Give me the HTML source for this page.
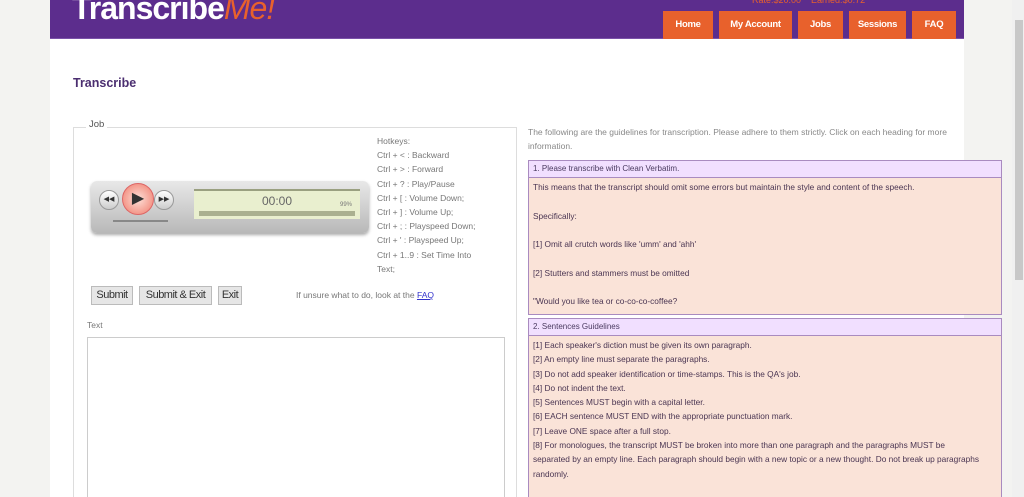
<!DOCTYPE html>
<html style="width:1024px;height:497px;overflow:hidden"><head><style>
*{margin:0;padding:0;box-sizing:border-box}
body{width:1024px;height:497px;overflow:hidden;background:#f3f3f1;font-family:"Liberation Sans",sans-serif;position:relative}
.abs{position:absolute}
#wrap{left:50px;top:0;width:914px;height:497px;background:#fff}
#hdr{left:50px;top:0;width:914px;height:39px;background:#5c2d8d;border-bottom:1px solid #7a52a8}
.nav{top:11px;height:28px;background:#e8612c;color:#fff;font-size:9.5px;font-weight:bold;text-align:center;line-height:28px;letter-spacing:-0.3px}
.hk{left:377px;font-size:8.5px;color:#777;line-height:14.2px;top:134px}
.btn{top:286px;height:19px;border:1px solid #bbb;background:#e6e6e6;font-size:11px;color:#333;text-align:center;line-height:17px;letter-spacing:-0.5px}
.box{left:528px;width:474px;border:1px solid #a98bc0;overflow:hidden}
.bh{background:#f1dfff;font-size:8px;color:#4a3a60;padding-left:4px;line-height:16px;border-bottom:1px solid #a98bc0}
.bb{background:#fae3d8;font-size:8.3px;color:#4a3552;padding:2px 4px}
</style></head><body>
<div class="abs" id="wrap"></div>
<div class="abs" style="left:1012px;top:0;width:12px;height:497px;background:#f0f0f0"></div>
<div class="abs" style="left:1015px;top:20px;width:8px;height:260px;background:#c8c8c8"></div>
<div class="abs" id="hdr"></div>
<div class="abs" style="left:72px;top:-10px;font-size:32px;font-weight:bold;color:#fff;letter-spacing:-1px">Transcribe<span style="color:#e8612c;font-style:italic;font-weight:normal">Me!</span></div>
<div class="abs" style="left:752px;top:-5px;font-size:9px;color:#e8612c">Rate:$20.00 &nbsp;&nbsp; Earned:$0.72</div>
<div class="abs nav" style="left:663px;width:50px">Home</div>
<div class="abs nav" style="left:719px;width:73px">My Account</div>
<div class="abs nav" style="left:798px;width:45px">Jobs</div>
<div class="abs nav" style="left:849px;width:57px">Sessions</div>
<div class="abs nav" style="left:912px;width:44px">FAQ</div>
<div class="abs" style="left:73px;top:76px;font-size:12.5px;font-weight:bold;color:#4b2e70">Transcribe</div>
<div class="abs" style="left:73px;top:127px;width:444px;height:370px;border:1px solid #ddd;border-bottom:none"></div>
<div class="abs" style="left:86px;top:119px;background:#fff;padding:0 3px;font-size:9.5px;color:#555">Job</div>
<div class="abs hk">Hotkeys:<br>Ctrl + &lt; : Backward<br>Ctrl + &gt; : Forward<br>Ctrl + ? : Play/Pause<br>Ctrl + [ : Volume Down;<br>Ctrl + ] : Volume Up;<br>Ctrl + ; : Playspeed Down;<br>Ctrl + ' : Playspeed Up;<br>Ctrl + 1..9 : Set Time Into<br>Text;</div>
<div class="abs" style="left:91px;top:181px;width:278px;height:52px;border-radius:6px;background:linear-gradient(#e8e8e8,#b8b8b8);box-shadow:0 2px 3px #aaa"></div>
<div class="abs" style="left:99px;top:190px;width:20px;height:20px;border-radius:50%;background:linear-gradient(#fff,#ccc);border:1px solid #999;font-size:7px;text-align:center;line-height:18px;color:#333">◀◀</div>
<div class="abs" style="left:154px;top:190px;width:20px;height:20px;border-radius:50%;background:linear-gradient(#fff,#ccc);border:1px solid #999;font-size:7px;text-align:center;line-height:18px;color:#333">▶▶</div>
<div class="abs" style="left:122px;top:183px;width:32px;height:32px;border-radius:50%;background:radial-gradient(#fde0d8,#f07a6a);border:1px solid #d66;font-size:16px;text-align:center;line-height:30px;color:#333">▶</div>
<div class="abs" style="left:113px;top:220px;width:55px;height:2px;background:#888"></div>
<div class="abs" style="left:194px;top:189px;width:166px;height:30px;background:#e9efcf;border-top:2px solid #9aa080"></div>
<div class="abs" style="left:262px;top:194px;font-size:12px;color:#666">00:00</div>
<div class="abs" style="left:340px;top:202px;font-size:6px;color:#777">99%</div>
<div class="abs" style="left:199px;top:211px;width:156px;height:5px;background:#aab090"></div>
<div class="abs btn" style="left:91px;width:42px">Submit</div>
<div class="abs btn" style="left:139px;width:73px">Submit &amp; Exit</div>
<div class="abs btn" style="left:218px;width:24px">Exit</div>
<div class="abs" style="left:296px;top:290px;font-size:8.5px;color:#777">If unsure what to do, look at the <span style="color:#33c;text-decoration:underline">FAQ</span></div>
<div class="abs" style="left:87px;top:320px;font-size:8.5px;color:#777">Text</div>
<div class="abs" style="left:87px;top:337px;width:418px;height:160px;border:1px solid #ccc;border-bottom:none"></div>
<div class="abs" style="left:528px;top:125px;width:440px;font-size:8.5px;line-height:14px;color:#888">The following are the guidelines for transcription. Please adhere to them strictly. Click on each heading for more information.</div>
<div class="abs box" style="top:160px;height:155px"><div class="bh">1. Please transcribe with Clean Verbatim.</div><div class="bb" style="line-height:14.3px;height:138px">This means that the transcript should omit some errors but maintain the style and content of the speech.<br><br>Specifically:<br><br>[1] Omit all crutch words like 'umm' and 'ahh'<br><br>[2] Stutters and stammers must be omitted<br><br>"Would you like tea or co-co-co-coffee?</div></div>
<div class="abs box" style="top:318px;height:179px;border-bottom:none"><div class="bh">2. Sentences Guidelines</div><div class="bb" style="line-height:14.3px;height:170px;padding-right:22px">[1] Each speaker's diction must be given its own paragraph.<br>[2] An empty line must separate the paragraphs.<br>[3] Do not add speaker identification or time-stamps. This is the QA's job.<br>[4] Do not indent the text.<br>[5] Sentences MUST begin with a capital letter.<br>[6] EACH sentence MUST END with the appropriate punctuation mark.<br>[7] Leave ONE space after a full stop.<br>[8] For monologues, the transcript MUST be broken into more than one paragraph and the paragraphs MUST be separated by an empty line. Each paragraph should begin with a new topic or a new thought. Do not break up paragraphs randomly.</div></div>
</body></html>
